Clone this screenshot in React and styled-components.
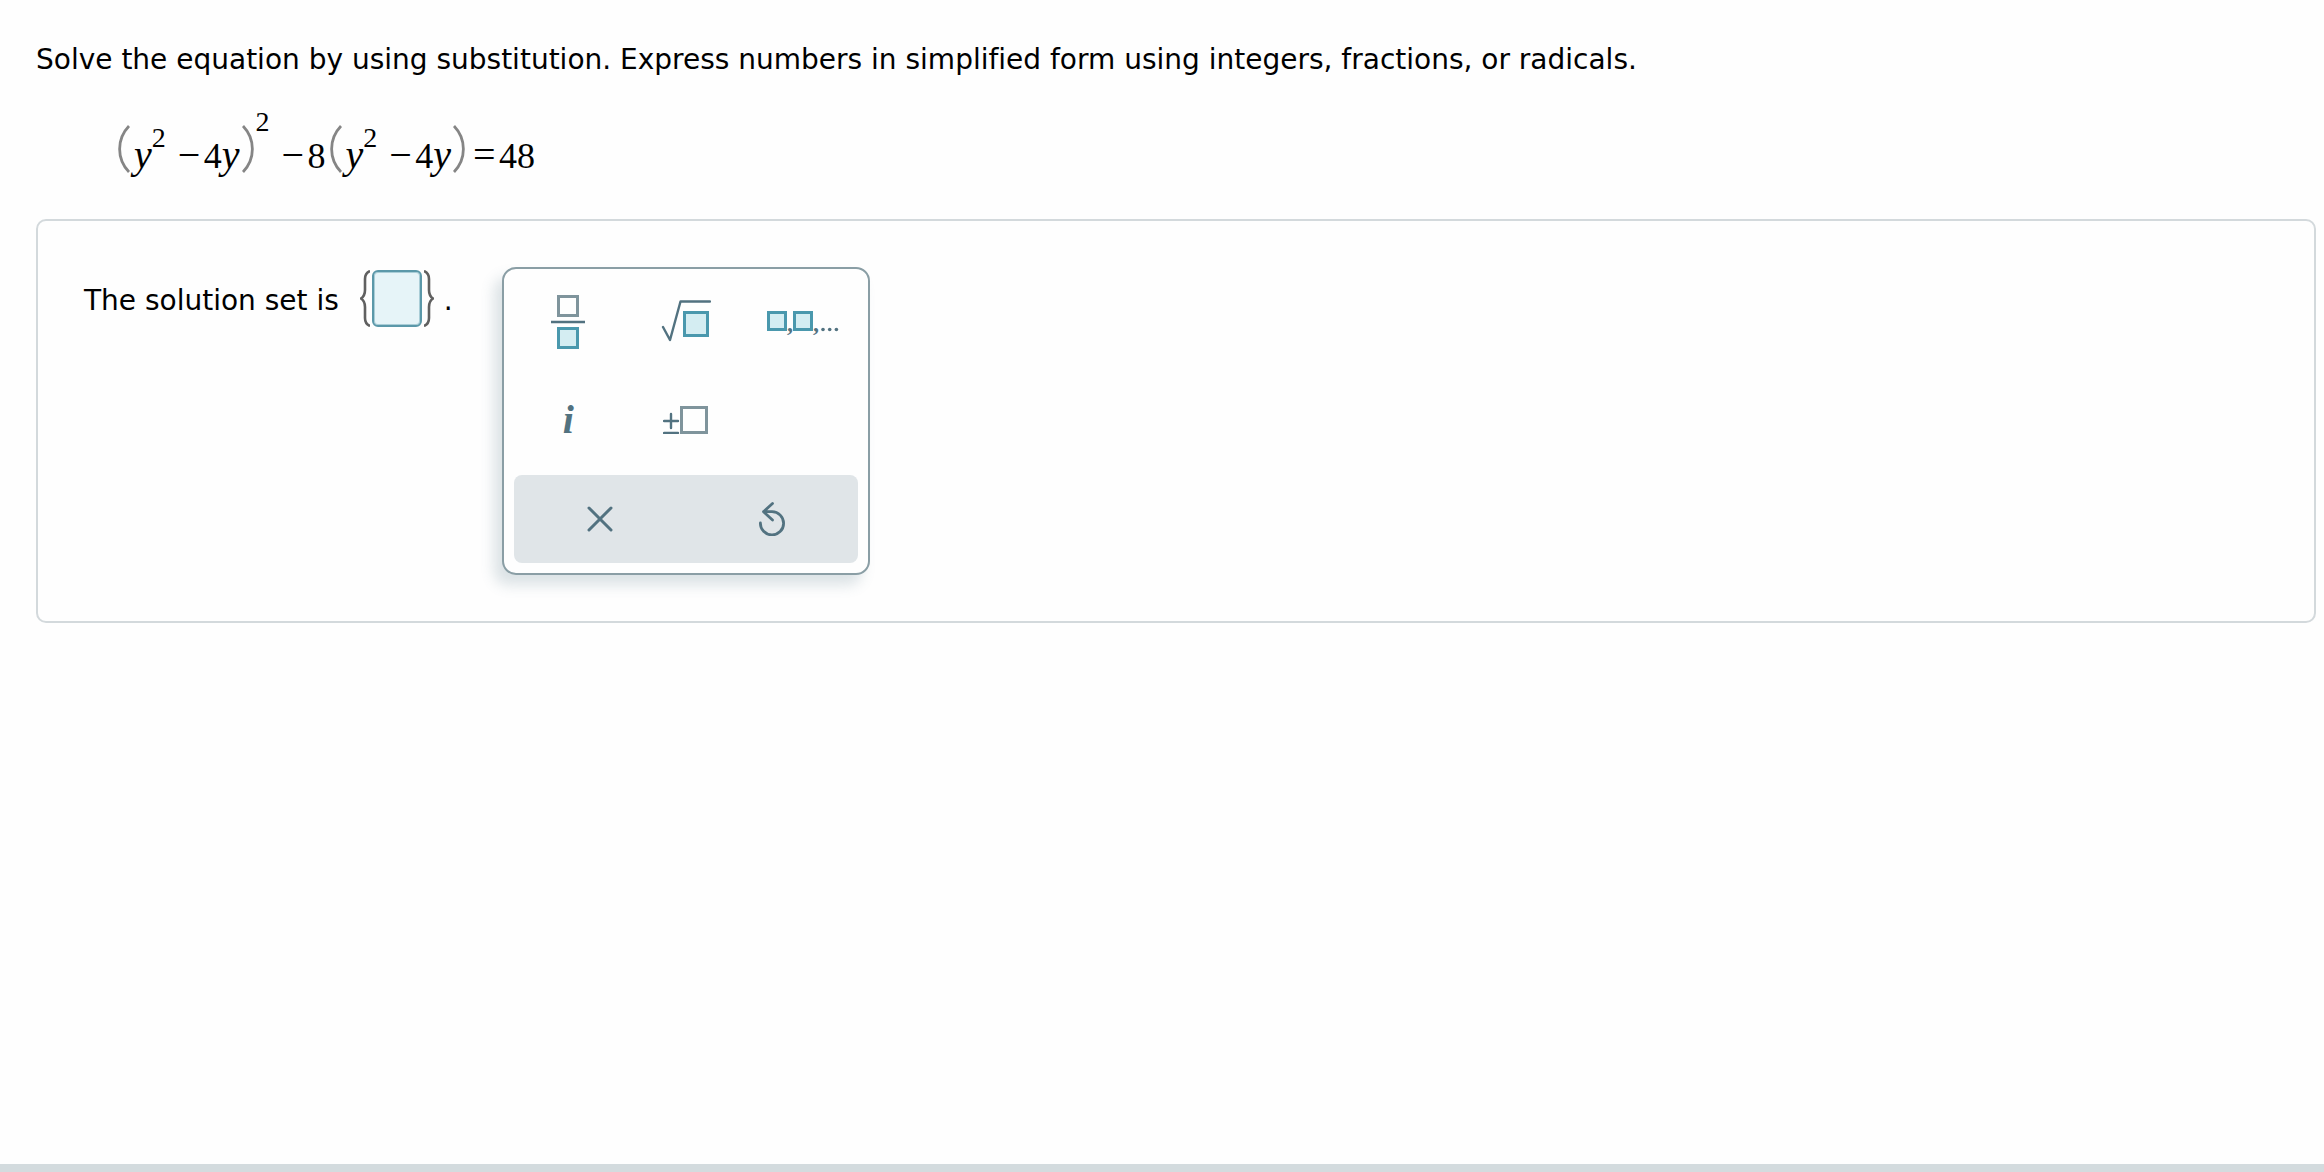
import React from "react";
import styled, { createGlobalStyle } from "styled-components";

const ink = "#527280";
const teal = "#4a98ad";
const tealFill = "#d4edf2";
const outline = "#7f949c";

const GlobalStyle = createGlobalStyle`
  *, *::before, *::after { box-sizing: border-box; }
  body {
    margin: 0;
    background: #fefefe;
    color: #000;
    font-family: Verdana, "DejaVu Sans", sans-serif;
    font-size: 28px;
    line-height: 40px;
    font-variant-ligatures: none;
  }
`;

const Page = styled.div`
  display: flex;
  flex-direction: column;
  min-height: 100vh;
`;

const Main = styled.main`
  flex: 1;
  padding: 40px 8px 40px 36px;
`;

const Prompt = styled.p`
  margin: 0;
`;

const Equation = styled.div`
  display: flex;
  align-items: flex-end;
  margin: 36px 0 0 78px;
  height: 60px;
  font-family: "Liberation Serif", "Times New Roman", serif;
  font-size: 36px;
  line-height: 40px;
`;

const Variable = styled.i`
  padding-left: ${(p) => (p.$lead ? 4 : 0)}px;
  font-size: 40px;
  line-height: 42px;
`;

const Exponent = styled.sup`
  font-size: 28px;
  line-height: 32px;
  margin-bottom: ${(p) => (p.$outer ? 38 : 22)}px;
  padding-left: ${(p) => (p.$outer ? 2 : 0)}px;
`;

const Operator = styled.span`
  width: 22px;
  margin: 0 4px 0 ${(p) => (p.$tight ? 8 : 12)}px;
  font-size: 40px;
  line-height: 42px;
  text-align: center;
`;

const ParenIcon = styled.svg`
  flex: none;
  width: 12px;
  height: 48px;
  margin: 0 0 3px ${(p) => (p.$close ? 2 : 4)}px;
  transform: ${(p) => (p.$close ? "scaleX(-1)" : "none")};
`;

const AnswerPanel = styled.section`
  display: flex;
  align-items: flex-start;
  gap: 49px;
  margin-top: 43px;
  padding: 46px;
  border: 2px solid #d3d9dc;
  border-radius: 10px;
`;

const AnswerLine = styled.div`
  display: flex;
  align-items: center;
  margin-top: 3px;
`;

const AnswerLabel = styled.label`
  margin-right: 21px;
  padding-top: 5px;
`;

const BraceIcon = styled.svg`
  flex: none;
  width: 10px;
  height: 57px;
  transform: ${(p) => (p.$close ? "scaleX(-1)" : "none")};
`;

const AnswerInput = styled.input`
  width: 50px;
  height: 57px;
  margin: 0 2px;
  padding: 0 6px;
  border: 2px solid #5b98a9;
  border-radius: 6px;
  background: #e6f4f8;
  box-shadow: inset 0 0 0 1px #a9cdd7;
  font: inherit;
  outline: none;
`;

const Period = styled.span`
  margin-left: 10px;
  padding-top: 5px;
`;

const Keypad = styled.div`
  width: 368px;
  padding: 8px 10px 10px;
  border: 2px solid #8a9ea5;
  border-radius: 14px;
  background: #fefefe;
  box-shadow: -8px 10px 14px rgba(82, 114, 128, 0.2);
`;

const Keys = styled.div`
  display: grid;
  grid-template-columns: repeat(3, 1fr);
  grid-auto-rows: 90px;
  row-gap: 8px;
  margin: 0 -4px 10px;
`;

const Key = styled.button`
  display: flex;
  align-items: center;
  justify-content: center;
  padding: 0;
  border: 0;
  background: none;
  color: ${ink};
  font: italic bold 40px/40px "Liberation Serif", "Times New Roman", serif;
  cursor: pointer;
`;

const Actions = styled.div`
  display: grid;
  grid-template-columns: 1fr 1fr;
  height: 88px;
  border-radius: 8px;
  background: #e0e5e8;
`;

const BottomBar = styled.footer`
  height: 8px;
  background: #d3dbde;
`;

const Paren = ({ close }) => (
  <ParenIcon viewBox="0 0 12 48" $close={close} aria-hidden="true">
    <path d="M11 1C-1.500 14-1.500 34 11 47" fill="none" stroke="#858585" strokeWidth="2.800" />
  </ParenIcon>
);

const Brace = ({ close }) => (
  <BraceIcon viewBox="0 0 10 57" $close={close} aria-hidden="true">
    <path
      d="M10 1Q5 3 5 9V20Q5 26 1 28.500Q5 31 5 37V48Q5 54 10 56"
      fill="none"
      stroke="#606060"
      strokeWidth="2.600"
    />
  </BraceIcon>
);

const Slot = ({ x, y, size, empty }) => (
  <rect
    x={x + 1.5}
    y={y + 1.5}
    width={size - 3}
    height={size - 3}
    fill={empty ? "#fefefe" : tealFill}
    stroke={empty ? outline : teal}
    strokeWidth="3"
  />
);

const FractionIcon = () => (
  <svg width="34" height="54" viewBox="0 0 34 54">
    <Slot x={6} y={0} size={22} empty />
    <path d="M0 27H34" stroke={ink} strokeWidth="2.600" />
    <Slot x={6} y={32} size={22} />
  </svg>
);

const RootIcon = () => (
  <svg width="50" height="44" viewBox="0 0 50 44">
    <path
      d="M2 27L9 40L19.500 1.500H49"
      fill="none"
      stroke={ink}
      strokeWidth="2.400"
      strokeLinecap="round"
      strokeLinejoin="round"
    />
    <Slot x={22} y={11} size={26} />
  </svg>
);

const ListIcon = () => (
  <svg width="72" height="28" viewBox="0 0 72 28">
    <Slot x={0} y={3} size={20} />
    <Slot x={26} y={3} size={20} />
    <g fill={ink}>
      <g fontFamily="Liberation Serif, serif" fontSize="24" fontWeight="bold" fontStyle="normal">
        <text x="20" y="23">,</text>
        <text x="46" y="23">,</text>
      </g>
      <circle cx="56" cy="21.500" r="1.800" />
      <circle cx="62.700" cy="21.500" r="1.800" />
      <circle cx="69.400" cy="21.500" r="1.800" />
    </g>
  </svg>
);

const PlusMinusIcon = () => (
  <svg width="46" height="28" viewBox="0 0 46 28">
    <path
      d="M1 15H15M8 8V22M1 27H15"
      stroke={ink}
      strokeWidth="2.400"
      strokeLinecap="round"
    />
    <Slot x={17} y={0} size={28} empty />
  </svg>
);

const ClearIcon = () => (
  <svg width="26" height="26" viewBox="0 0 26 26">
    <path d="M2 2L24 24M24 2L2 24" stroke={ink} strokeWidth="3" strokeLinecap="round" />
  </svg>
);

const UndoIcon = () => (
  <svg width="26" height="34" viewBox="0 0 26 34">
    <path
      d="M13.500 1.500L4.500 9.700L13.500 18M4.500 9.700H13A11.600 11.600 0 1 1 1.400 21"
      fill="none"
      stroke={ink}
      strokeWidth="2.800"
      strokeLinecap="round"
      strokeLinejoin="round"
    />
  </svg>
);

const Group = () => (
  <>
    <Paren />
    <Variable $lead>y</Variable>
    <Exponent>2</Exponent>
    <Operator>−</Operator>
    <span>4</span>
    <Variable>y</Variable>
    <Paren close />
  </>
);

export default function App() {
  return (
    <Page>
      <GlobalStyle />
      <Main>
        <Prompt>
          Solve the equation by using substitution. Express numbers in simplified form using
          integers, fractions, or radicals.
        </Prompt>
        <Equation>
          <Group />
          <Exponent $outer>2</Exponent>
          <Operator>−</Operator>
          <span>8</span>
          <Group />
          <Operator $tight>=</Operator>
          <span>48</span>
        </Equation>
        <AnswerPanel>
          <AnswerLine>
            <AnswerLabel htmlFor="solution">The solution set is</AnswerLabel>
            <Brace />
            <AnswerInput id="solution" type="text" autoComplete="off" />
            <Brace close />
            <Period>.</Period>
          </AnswerLine>
          <Keypad>
            <Keys>
              <Key type="button" aria-label="Fraction"><FractionIcon /></Key>
              <Key type="button" aria-label="Square root"><RootIcon /></Key>
              <Key type="button" aria-label="List"><ListIcon /></Key>
              <Key type="button">i</Key>
              <Key type="button" aria-label="Plus or minus"><PlusMinusIcon /></Key>
            </Keys>
            <Actions>
              <Key type="button" aria-label="Clear"><ClearIcon /></Key>
              <Key type="button" aria-label="Undo"><UndoIcon /></Key>
            </Actions>
          </Keypad>
        </AnswerPanel>
      </Main>
      <BottomBar />
    </Page>
  );
}
